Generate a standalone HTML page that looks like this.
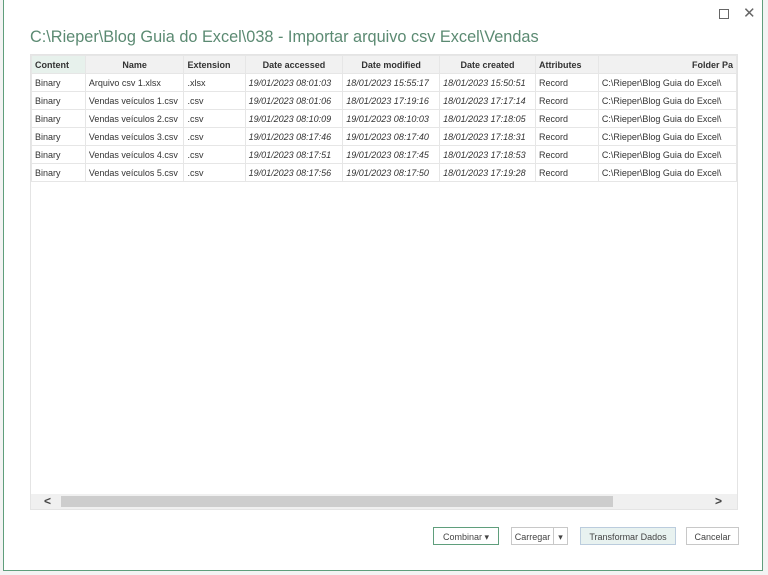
<!DOCTYPE html><html><head><style>
body{margin:0;width:768px;height:575px;background:#f3f3f3;position:relative;overflow:hidden;font-family:"Liberation Sans",sans-serif}
.dlg{position:absolute;left:3px;top:0;width:760px;height:571px;background:#fff;border:1px solid #5f9e7c;border-top:none;box-sizing:border-box}
.t{position:absolute;left:30px;top:28px;font-size:16.3px;color:#5b8a72;white-space:nowrap}
.grid{position:absolute;left:30px;top:54px;width:708px;height:456px;border:1px solid #e4e4e4;box-sizing:border-box;overflow:hidden}
table{border-collapse:collapse;font-size:9px;color:#333;table-layout:fixed}
td,th{height:17px;border:1px solid #e6e6e6;padding:0 3px;white-space:nowrap;overflow:hidden}
th{background:#f1f1f1;font-weight:bold;text-align:center}
th.c{background:#e7f1ec;text-align:left}
td.i{font-style:italic}
.sb{position:absolute;left:0;bottom:0;width:706px;height:15px;background:#f0f0f0}
.th{position:absolute;left:30px;top:2px;width:552px;height:11px;background:#cdcdcd}
.btn{position:absolute;top:527px;height:18px;border:1px solid #c8c8c8;font-size:9px;color:#444;text-align:center;line-height:18px;box-sizing:border-box;background:#fff}
</style></head><body>
<div class="dlg"></div>
<div style="position:absolute;left:719px;top:9px;width:8px;height:8px;border:1px solid #666"></div>
<div style="position:absolute;left:743px;top:4px;font-size:15px;color:#666">✕</div>
<div class="t">C:\Rieper\Blog Guia do Excel\038 - Importar arquivo csv Excel\Vendas</div>
<div class="grid"><table>
<colgroup><col style="width:56px"><col style="width:99px"><col style="width:63px"><col style="width:99px"><col style="width:98px"><col style="width:97px"><col style="width:65px"><col style="width:140px"></colgroup>
<tr><th class="c">Content</th><th>Name</th><th style="text-align:left">Extension</th><th>Date accessed</th><th>Date modified</th><th>Date created</th><th style="text-align:left">Attributes</th><th style="text-align:right">Folder Pa</th></tr>
<tr><td>Binary</td><td>Arquivo csv 1.xlsx</td><td>.xlsx</td><td class="i">19/01/2023 08:01:03</td><td class="i">18/01/2023 15:55:17</td><td class="i">18/01/2023 15:50:51</td><td>Record</td><td>C:\Rieper\Blog Guia do Excel\</td></tr>
<tr><td>Binary</td><td>Vendas veículos 1.csv</td><td>.csv</td><td class="i">19/01/2023 08:01:06</td><td class="i">18/01/2023 17:19:16</td><td class="i">18/01/2023 17:17:14</td><td>Record</td><td>C:\Rieper\Blog Guia do Excel\</td></tr>
<tr><td>Binary</td><td>Vendas veículos 2.csv</td><td>.csv</td><td class="i">19/01/2023 08:10:09</td><td class="i">19/01/2023 08:10:03</td><td class="i">18/01/2023 17:18:05</td><td>Record</td><td>C:\Rieper\Blog Guia do Excel\</td></tr>
<tr><td>Binary</td><td>Vendas veículos 3.csv</td><td>.csv</td><td class="i">19/01/2023 08:17:46</td><td class="i">19/01/2023 08:17:40</td><td class="i">18/01/2023 17:18:31</td><td>Record</td><td>C:\Rieper\Blog Guia do Excel\</td></tr>
<tr><td>Binary</td><td>Vendas veículos 4.csv</td><td>.csv</td><td class="i">19/01/2023 08:17:51</td><td class="i">19/01/2023 08:17:45</td><td class="i">18/01/2023 17:18:53</td><td>Record</td><td>C:\Rieper\Blog Guia do Excel\</td></tr>
<tr><td>Binary</td><td>Vendas veículos 5.csv</td><td>.csv</td><td class="i">19/01/2023 08:17:56</td><td class="i">19/01/2023 08:17:50</td><td class="i">18/01/2023 17:19:28</td><td>Record</td><td>C:\Rieper\Blog Guia do Excel\</td></tr>
</table>
<div class="sb"><div class="th"></div><span style="position:absolute;left:13px;top:0;font-size:12px;font-weight:bold;color:#444">&lt;</span><span style="position:absolute;left:684px;top:0;font-size:12px;font-weight:bold;color:#444">&gt;</span></div>
</div>
<div class="btn" style="left:433px;width:66px;border-color:#5f9e7c">Combinar ▾</div>
<div class="btn" style="left:511px;width:43px">Carregar</div>
<div class="btn" style="left:553px;width:15px">▾</div>
<div class="btn" style="left:580px;width:96px;background:#e8f2f0;border-color:#bcd">Transformar Dados</div>
<div class="btn" style="left:686px;width:53px">Cancelar</div>
</body></html>
